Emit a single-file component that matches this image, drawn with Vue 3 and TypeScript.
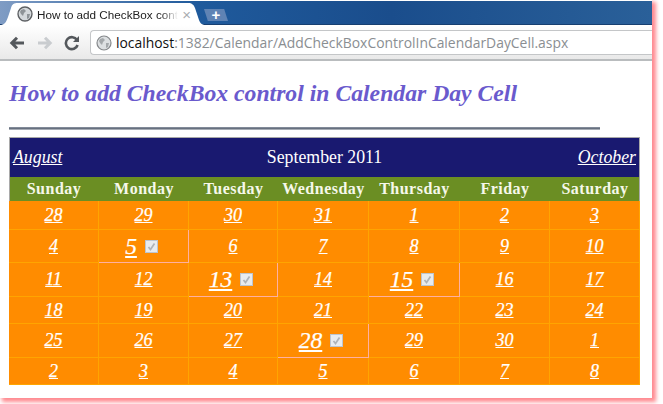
<script setup lang="ts">
interface Day {
  n: number;
  checked?: boolean;
}

const headers = ["Sunday", "Monday", "Tuesday", "Wednesday", "Thursday", "Friday", "Saturday"];

const nums = [
  28, 29, 30, 31, 1, 2, 3,
  4, 5, 6, 7, 8, 9, 10,
  11, 12, 13, 14, 15, 16, 17,
  18, 19, 20, 21, 22, 23, 24,
  25, 26, 27, 28, 29, 30, 1,
  2, 3, 4, 5, 6, 7, 8,
];

// indexes of the day cells holding a checkbox
const picked = [8, 16, 18, 31];

const days: Day[] = nums.map((n, i) => ({ n, checked: picked.includes(i) }));
</script>

<template>
  <div class="stage">
    <div class="window">
      <div class="tabstrip">
        <div class="tab">
          <svg class="globe" width="16" height="16" viewBox="0 0 16 16" aria-hidden="true">
            <circle cx="8" cy="8" r="7" fill="#d5d9dc" stroke="#5e6164" stroke-width="1.4" />
            <path d="M4 4l3-1 2 2-2 2-1 3-2-2-1-2zM10 8l3 0-1 4-2 1z" fill="#8f9498" />
          </svg>
          <span class="tab__title">How to add CheckBox cont</span>
          <span class="tab__close">×</span>
        </div>
        <div class="newtab"><span>+</span></div>
      </div>
      <div class="toolbar">
        <svg width="18" height="16" viewBox="0 0 18 16" aria-hidden="true">
          <path d="M16 8H4.5M9 2.8L3.8 8 9 13.2" fill="none" stroke="#54585c" stroke-width="3" />
        </svg>
        <svg width="18" height="16" viewBox="0 0 18 16" aria-hidden="true">
          <path d="M2 8h11.5M9 2.8L14.2 8 9 13.2" fill="none" stroke="#c9cccf" stroke-width="3" />
        </svg>
        <svg width="16" height="16" viewBox="0 0 16 16" aria-hidden="true">
          <path d="M13 5a6 6 0 1 0 .6 5" fill="none" stroke="#54585c" stroke-width="2.6" />
          <path d="M15 1v6H9z" fill="#54585c" />
        </svg>
        <div class="omnibox">
          <svg width="16" height="16" viewBox="0 0 16 16" aria-hidden="true">
            <circle cx="8" cy="8" r="7" fill="#dde0e2" stroke="#85888b" stroke-width="1.2" />
            <path d="M4 4l3-1 2 2-2 2-1 3-2-2-1-2zM10 8l3 0-1 4-2 1z" fill="#a4a8ab" />
          </svg>
          <span class="url"><b>localhost</b>:1382/Calendar/AddCheckBoxControlInCalendarDayCell.aspx</span>
        </div>
      </div>

      <div class="page">
        <h1 class="title">How to add CheckBox control in Calendar Day Cell</h1>
        <hr class="rule" />

        <div class="calendar">
          <div class="cal-title">
            <a class="link">August</a>
            <span class="month">September 2011</span>
            <a class="link link--next">October</a>
          </div>
          <div class="cal-head">
            <div v-for="h in headers" :key="h">{{ h }}</div>
          </div>
          <div class="cal-days">
            <div v-for="(d, i) in days" :key="i" class="cell" :class="{ 'cell--picked': d.checked }">
              <a class="num">{{ d.n }}</a>
              <span v-if="d.checked" class="check">
                <svg width="11" height="11" viewBox="0 0 11 11" aria-hidden="true">
                  <path d="M2.5 6l2 2.5 4-6" fill="none" stroke="#aeb3b8" stroke-width="1.7" />
                </svg>
              </span>
            </div>
          </div>
        </div>
      </div>
    </div>
  </div>
</template>

<style>
html,
body {
  margin: 0;
  background: #fff;
}
</style>

<style scoped>
.stage {
  width: 663px;
  height: 404px;
  overflow: hidden;
}
.window {
  width: 652px;
  height: 398px;
  background: #fff;
  box-shadow: 3px 3px 4px 1px #ff8a90, 0 0 3px #ffe6e8;
  overflow: hidden;
  font-family: "Liberation Serif", serif;
}
.tabstrip {
  height: 24px;
  margin-top: 1px;
  display: flex;
  align-items: flex-end;
  background: linear-gradient(90deg, #7f9cc4 0, #1f5a9c 30%, #1a4d8c 60%, #2a6099 100%);
  box-shadow: inset 0 -1px #173f70;
}
.tab {
  width: 206px;
  height: 22px;
  box-sizing: border-box;
  display: flex;
  align-items: center;
  gap: 4px;
  padding: 0 15px 0 17px;
  background: #fff;
  clip-path: path("M0 22C4 22 6 20 8 14L11 5C12 1 14 0 18 0L188 0C192 0 194 2 195 5L199 17C200 20 202 22 206 22Z");
  font: 11.7px "Liberation Sans", sans-serif;
  color: #222;
  white-space: nowrap;
}
.globe {
  flex: none;
}
.tab__title {
  flex: 1;
  -webkit-mask-image: linear-gradient(90deg, #000 88%, transparent);
  mask-image: linear-gradient(90deg, #000 88%, transparent);
}
.tab__close {
  color: #a9adb1;
  font-size: 15px;
}
.newtab {
  width: 24px;
  height: 12px;
  margin: 0 0 4px -2px;
  display: flex;
  align-items: center;
  justify-content: center;
  background: #5f83b4;
  clip-path: polygon(0 0, 84% 0, 100% 100%, 16% 100%);
  color: #fff;
  font: bold 15px/12px "Liberation Sans", sans-serif;
}
.toolbar {
  height: 36px;
  box-sizing: border-box;
  display: flex;
  align-items: center;
  gap: 10px;
  padding: 1px 0 0 8px;
  background: linear-gradient(#fff, #e9e9e9);
  border-bottom: 2px solid #b9bcbe;
}
.toolbar > svg {
  flex: none;
}
.omnibox {
  flex: 1;
  height: 25px;
  box-sizing: border-box;
  display: flex;
  align-items: center;
  gap: 4px;
  padding-left: 5px;
  background: #fff;
  border: 1px solid #c4c6c8;
  border-right: 0;
  border-radius: 4px 0 0 4px;
}
.url {
  font: 13.9px "Open Sans", "Liberation Sans", sans-serif;
  color: #8a8e92;
  white-space: nowrap;
}
.url b {
  font-weight: 400;
  color: #111;
}
.page {
  padding: 19px 0 0 9px;
}
.title {
  margin: 0;
  font: italic bold 23.7px/26px "Liberation Serif", serif;
  color: #6a5acd;
}
.rule {
  width: 591px;
  height: 3px;
  margin: 21px 0 0;
  border: 0;
  background: linear-gradient(#8e97a5, #67707f, #c6cad0);
}
.calendar {
  width: 631px;
  margin-top: 7px;
  border-top: 1px solid #a9a9a9;
  color: #fff;
}
.cal-title {
  height: 39px;
  display: grid;
  grid-template-columns: 1fr auto 1fr;
  align-items: center;
  padding: 0 4px;
  background: #191970;
  box-shadow: inset 1px 0 #a9a9a9, inset -1px 0 #a9a9a9;
  font-size: 17.8px;
}
.link {
  font-style: italic;
  text-decoration: underline;
}
.link--next {
  text-align: right;
}
.cal-head {
  display: grid;
  grid-template-columns: 90px 90px 89px 91px 91px 90px 90px;
  height: 24px;
  align-items: center;
  background: #6b8e23;
  box-shadow: inset 1px 0 #a9a9a9, inset -1px 0 #a9a9a9;
  text-align: center;
  font-weight: bold;
  font-size: 16px;
  letter-spacing: 0.5px;
  color: #f6f8ea;
}
.cal-days {
  display: grid;
  grid-template-columns: 90px 90px 89px 91px 91px 90px 90px;
  grid-template-rows: 29px 33px 34px 27px 34px 27px;
  background: #ff8c00;
}
.cell {
  box-sizing: border-box;
  display: flex;
  align-items: center;
  justify-content: center;
  gap: 8px;
  border-right: 1px solid #ffa500;
  border-bottom: 1px solid #ffa500;
}
.cell--picked {
  padding-right: 4px;
  border-right-color: #ffb0a0;
  border-bottom-color: #ffb0a0;
}
.num {
  font-style: italic;
  font-size: 18px;
  text-decoration: underline;
  -webkit-text-stroke: 0.25px #fff;
}
.cell--picked .num {
  font-size: 23.5px;
}
.check {
  width: 13px;
  height: 13px;
  box-sizing: border-box;
  display: flex;
  align-items: center;
  justify-content: center;
  background: #e8ebee;
  border: 1px solid #bcc5d0;
}
</style>
